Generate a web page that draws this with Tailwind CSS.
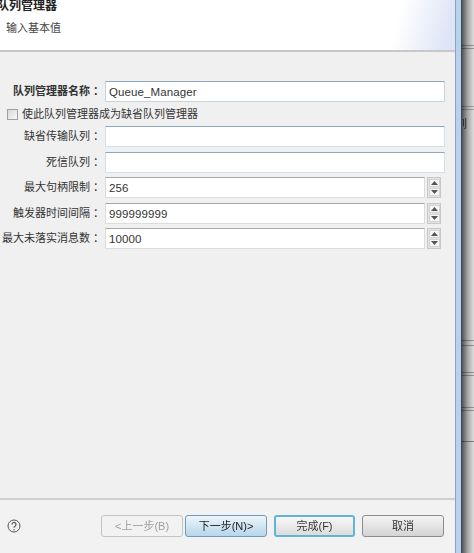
<!DOCTYPE html>
<html lang="zh">

<head>
  <meta charset="UTF-8">
  <title>队列管理器</title>
  <script src="https://cdn.jsdelivr.net/npm/@tailwindcss/browser@4"></script>
</head>

<body class="bg-white overflow-hidden">
  <div class="flex w-[474px] h-[553px] overflow-hidden text-[11px] text-[#333] font-['Liberation_Sans','Noto_Sans_CJK_SC',sans-serif] blur-[0.5px]">

    <!-- dialog -->
    <div class="w-[455px] h-full flex flex-col bg-[#f0f0f0]">
      <!-- header -->
      <div class="h-[50px] shrink-0 bg-[linear-gradient(105deg,white_86%,#dde4f5_98%)] overflow-hidden">
        <div class="-mt-[3px] -ml-[3px] text-[12px] leading-[18px] font-bold text-[#222]">队列管理器</div>
        <div class="mt-[5px] pl-[6px] leading-[16px] text-[#444]">输入基本值</div>
      </div>
      <div class="h-[2px] shrink-0 bg-[#c8c8c8]"></div>

      <!-- form -->
      <div class="flex-1 pt-[29px] pr-[10px]">
        <div class="flex items-center h-[21px]">
          <label class="w-[105px] shrink-0 pr-[1px] text-right font-bold whitespace-nowrap">队列管理器名称<span class="ml-[3px]">：</span></label>
          <input value="Queue_Manager" class="w-[340px] h-full bg-white border border-[#c5d6e3] border-t-[#8ea9bf] px-[3px] text-[11.5px] tracking-[0.1px] text-[#333] outline-none">
        </div>

        <div class="flex items-center h-[13px] mt-[6px] pl-[7px]">
          <span class="w-[11px] h-[11px] shrink-0 border border-[#a0a0a0] bg-gradient-to-br from-[#d8d8d8] to-[#f8f8f8]"></span>
          <span class="ml-[4px] whitespace-nowrap">使此队列管理器成为缺省队列管理器</span>
        </div>

        <div class="flex items-center h-[21px] mt-[5px]">
          <label class="w-[105px] shrink-0 pr-[1px] text-right whitespace-nowrap">缺省传输队列<span class="ml-[3px]">：</span></label>
          <input class="w-[340px] h-full bg-white border border-[#cfe0ee] border-t-[#8ea9bf] outline-none">
        </div>

        <div class="flex items-center h-[21px] mt-[5px]">
          <label class="w-[105px] shrink-0 pr-[1px] text-right whitespace-nowrap">死信队列<span class="ml-[3px]">：</span></label>
          <input class="w-[340px] h-full bg-white border border-[#cfe0ee] border-t-[#8ea9bf] outline-none">
        </div>

        <div class="flex items-center h-[21px] mt-[4px]">
          <label class="w-[105px] shrink-0 pr-[1px] text-right whitespace-nowrap">最大句柄限制<span class="ml-[3px]">：</span></label>
          <input value="256" class="w-[320px] h-full bg-white border border-[#dcdcdc] border-t-[#a8a8a8] px-[3px] text-[11.5px] tracking-[0.1px] text-[#333] outline-none">
          <div class="ml-[2px] w-[14px] h-full flex flex-col gap-px items-center justify-center border border-[#c8c8c8] bg-[#e4e4e4]">
            <span class="w-[11px] h-[8px] flex items-center justify-center bg-[#f6f6f6] border border-[#d4d4d4] text-[#555]">
              <svg class="w-[7px] h-[4px]" viewBox="0 0 7 4"><path d="M3.5 0L7 4H0z" fill="currentColor"/></svg>
            </span>
            <span class="w-[11px] h-[8px] flex items-center justify-center bg-[#f6f6f6] border border-[#d4d4d4] text-[#555]">
              <svg class="w-[7px] h-[4px]" viewBox="0 0 7 4"><path d="M0 0h7L3.5 4z" fill="currentColor"/></svg>
            </span>
          </div>
        </div>

        <div class="flex items-center h-[21px] mt-[5px]">
          <label class="w-[105px] shrink-0 pr-[1px] text-right whitespace-nowrap">触发器时间间隔<span class="ml-[3px]">：</span></label>
          <input value="999999999" class="w-[320px] h-full bg-white border border-[#dcdcdc] border-t-[#a8a8a8] px-[3px] text-[11.5px] tracking-[0.1px] text-[#333] outline-none">
          <div class="ml-[2px] w-[14px] h-full flex flex-col gap-px items-center justify-center border border-[#c8c8c8] bg-[#e4e4e4]">
            <span class="w-[11px] h-[8px] flex items-center justify-center bg-[#f6f6f6] border border-[#d4d4d4] text-[#555]">
              <svg class="w-[7px] h-[4px]" viewBox="0 0 7 4"><path d="M3.5 0L7 4H0z" fill="currentColor"/></svg>
            </span>
            <span class="w-[11px] h-[8px] flex items-center justify-center bg-[#f6f6f6] border border-[#d4d4d4] text-[#555]">
              <svg class="w-[7px] h-[4px]" viewBox="0 0 7 4"><path d="M0 0h7L3.5 4z" fill="currentColor"/></svg>
            </span>
          </div>
        </div>

        <div class="flex items-center h-[21px] mt-[4px]">
          <label class="w-[105px] shrink-0 pr-[1px] text-right whitespace-nowrap">最大未落实消息数<span class="ml-[3px]">：</span></label>
          <input value="10000" class="w-[320px] h-full bg-white border border-[#dcdcdc] border-t-[#a8a8a8] px-[3px] text-[11.5px] tracking-[0.1px] text-[#333] outline-none">
          <div class="ml-[2px] w-[14px] h-full flex flex-col gap-px items-center justify-center border border-[#c8c8c8] bg-[#e4e4e4]">
            <span class="w-[11px] h-[8px] flex items-center justify-center bg-[#f6f6f6] border border-[#d4d4d4] text-[#555]">
              <svg class="w-[7px] h-[4px]" viewBox="0 0 7 4"><path d="M3.5 0L7 4H0z" fill="currentColor"/></svg>
            </span>
            <span class="w-[11px] h-[8px] flex items-center justify-center bg-[#f6f6f6] border border-[#d4d4d4] text-[#555]">
              <svg class="w-[7px] h-[4px]" viewBox="0 0 7 4"><path d="M0 0h7L3.5 4z" fill="currentColor"/></svg>
            </span>
          </div>
        </div>
      </div>

      <!-- footer -->
      <div class="h-[2px] shrink-0 bg-[#cfcfcf]"></div>
      <div class="h-[53px] shrink-0 flex items-start pt-[15px] pr-[11px] bg-[#f2f2f2]">
        <svg class="ml-[7px] mt-[4px] w-[14px] h-[14px] text-[#555]" viewBox="0 0 14 14" fill="none" stroke="currentColor">
          <circle cx="7" cy="7" r="6"/>
          <path d="M5 5.5a2 2 0 1 1 3 1.7c-.7.4-1 .8-1 1.6" stroke-width="1.2"/>
          <path d="M7 10v1.2" stroke-width="1.2"/>
        </svg>
        <div class="ml-auto flex">
          <button class="w-[82px] h-[22px] rounded-[3px] border border-[#c4c4c4] bg-[#f2f2f2] text-[#a0a0a0]">&lt;上一步(B)</button>
          <button class="ml-[2px] w-[82px] h-[22px] rounded-[3px] border border-[#6f9ab8] bg-gradient-to-b from-[#eef6fc] to-[#b6d5ea] text-[#222]">下一步(N)&gt;</button>
          <button class="ml-[7px] w-[81px] h-[22px] rounded-[3px] border-2 border-[#63b3d6] bg-gradient-to-b from-[#f8f8f8] to-[#dcdcdc] text-[#333]">完成(F)</button>
          <button class="ml-[7px] w-[82px] h-[22px] rounded-[3px] border border-[#8c8c8c] bg-gradient-to-b from-[#f4f4f4] to-[#d4d4d4] text-[#333]">取消</button>
        </div>
      </div>
    </div>

    <!-- window frame -->
    <div class="w-[1px] shrink-0 bg-[#8fa3b5]"></div>
    <div class="w-[5px] shrink-0 bg-[#b5d3ee]"></div>
    <div class="w-[1px] shrink-0 bg-[#3f4650]"></div>

    <!-- what shows behind the dialog -->
    <div class="relative w-[12px] shrink-0 h-full overflow-hidden bg-gradient-to-r from-[#555] via-[#aaa] to-[#e0e0e0]">
      <span class="absolute -left-[6px] top-[116px] text-[#222]">列</span>
      <div class="pt-[45px]"><div class="h-px bg-black/30"></div></div>
      <div class="mt-[2px] h-px bg-black/30"></div>
      <div class="mt-[57px] h-px bg-black/25"></div>
      <div class="mt-[2px] h-px bg-black/25"></div>
      <div class="mt-[230px] h-px bg-black/30"></div>
      <div class="mt-[4px] h-px bg-black/30"></div>
      <div class="mt-[26px] h-px bg-black/30"></div>
      <div class="mt-[2px] h-px bg-black/30"></div>
      <div class="mt-[31px] h-px bg-black/30"></div>
      <div class="mt-[2px] h-px bg-black/30"></div>
      <div class="mt-[30px] h-px bg-black/40"></div>
    </div>
  </div>
</body>

</html>
